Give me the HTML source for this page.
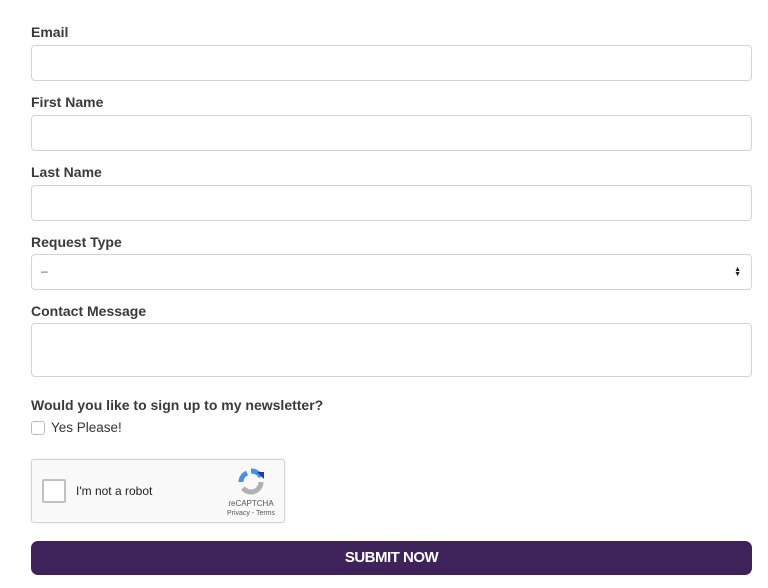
<!DOCTYPE html>
<html><head><style>
body{margin:0;background:#fff;font-family:"Liberation Sans",sans-serif;color:#333;}
.l{position:absolute;left:31px;font-size:14px;font-weight:bold;color:#3a3a3a;}
.i{position:absolute;left:31px;width:719px;border:1px solid #d4d4d4;border-radius:4px;background:#fff;}
</style></head><body>
<div class="l" style="top:24px">Email</div>
<div class="i" style="top:45px;height:34px"></div>
<div class="l" style="top:94px">First Name</div>
<div class="i" style="top:115px;height:34px"></div>
<div class="l" style="top:164px">Last Name</div>
<div class="i" style="top:185px;height:34px"></div>
<div class="l" style="top:234px">Request Type</div>
<div class="i" style="top:254px;height:34px"><span style="position:absolute;left:9px;top:9px;font-size:12px;color:#555">–</span><span style="position:absolute;right:10px;top:12px;font-size:7px;line-height:5px;color:#222">▲<br>▼</span></div>
<div class="l" style="top:303px">Contact Message</div>
<div class="i" style="top:323px;height:52px"></div>
<div class="l" style="top:397px">Would you like to sign up to my newsletter?</div>
<div style="position:absolute;left:31px;top:421px;width:12px;height:12px;border:1px solid #bbb;border-radius:3px"></div>
<div style="position:absolute;left:51px;top:420px;font-size:13.5px;color:#333">Yes Please!</div>
<div style="position:absolute;left:31px;top:459px;width:252px;height:62px;border:1px solid #d3d3d3;border-radius:3px;background:#f9f9f9;box-shadow:0 0 3px rgba(0,0,0,.08)">
<div style="position:absolute;left:10px;top:19px;width:20px;height:20px;border:2px solid #c1c1c1;border-radius:2px;background:#fff"></div>
<div style="position:absolute;left:44px;top:24px;font-size:12px;color:#222">I'm not a robot</div>
<svg style="position:absolute;left:205px;top:8px" width="28" height="28" viewBox="0 0 28 28"><path d="M14 3a11 11 0 0 1 10 6" stroke="#4a90e2" stroke-width="5" fill="none"/><path d="M20 4l7 0 0 7z" fill="#1c3aa9"/><path d="M24 14a10 10 0 0 1-18 6" stroke="#b0b0b0" stroke-width="5" fill="none"/><path d="M4 14a10 10 0 0 1 6-9" stroke="#4a90e2" stroke-width="5" fill="none"/></svg>
<div style="position:absolute;left:190px;top:39px;width:58px;text-align:center;font-size:8px;color:#555">reCAPTCHA</div>
<div style="position:absolute;left:190px;top:50px;width:58px;text-align:center;font-size:7px;color:#555">Privacy - Terms</div>
</div>
<div style="position:absolute;left:31px;top:541px;width:721px;height:34px;background:#3d2359;border-radius:7px;color:#fff;font-weight:bold;font-size:15px;text-align:center;line-height:34px;letter-spacing:-0.5px">SUBMIT NOW</div>
</body></html>
